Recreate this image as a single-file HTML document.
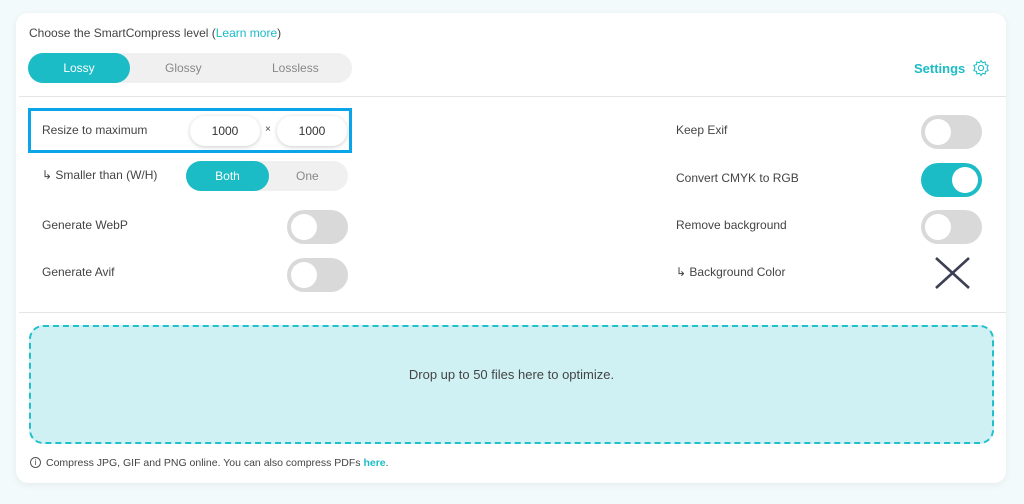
<!DOCTYPE html><html><head><style>
body{margin:0;width:1024px;height:504px;background:#f2fafc;font-family:"Liberation Sans",sans-serif;color:#444;position:relative;overflow:hidden}
.a{position:absolute}
.card{left:16px;top:13px;width:990px;height:470px;background:#fff;border-radius:12px;box-shadow:0 2px 8px rgba(0,0,0,.06)}
.t{font-size:12px;color:#444}
.seg{background:#f0f0f0;border-radius:16px}
.on{background:#1bbcc6;color:#fff;border-radius:16px;text-align:center}
.sw{width:61px;height:34px;border-radius:17px;background:#d9d9d9}
.sw::after{content:"";position:absolute;left:4px;top:4px;width:26px;height:26px;border-radius:50%;background:#fff}
.sw.o{background:#1bbcc6}.sw.o::after{left:31px}
.inp{width:70px;height:30px;border-radius:16px;background:#fff;box-shadow:0 1px 4px rgba(0,0,0,.2);text-align:center;line-height:30px;font-size:12px;color:#333}
</style></head><body>
<div class="a card"></div>
<div class="a t" style="left:29px;top:26px;font-size:12px">Choose the SmartCompress level (<span style="color:#1bbcc6">Learn more</span>)</div>
<div class="a seg" style="left:28px;top:53px;width:324px;height:30px"></div>
<div class="a on" style="left:28px;top:53px;width:102px;height:30px;line-height:30px;font-size:12px">Lossy</div>
<div class="a t" style="left:165px;top:61px;color:#888">Glossy</div>
<div class="a t" style="left:272px;top:61px;color:#888">Lossless</div>
<div class="a" style="left:914px;top:61px;font-size:13px;font-weight:bold;color:#1bbcc6">Settings</div>
<svg class="a" style="left:972px;top:59px" width="18" height="18" viewBox="0 0 24 24" fill="none" stroke="#1bbcc6" stroke-width="1.4"><circle cx="12" cy="12" r="3.5"/><path d="M12 2l2 3 3.5-1 .5 3.5 3.5 1-1.5 3.5 1.5 3.5-3.5 1-.5 3.5-3.5-1-2 3-2-3-3.5 1-.5-3.5-3.5-1L4 12 2.5 8.5l3.5-1L6.5 4 10 5z"/></svg>
<div class="a" style="left:19px;top:96px;width:987px;height:1px;background:#e5e5e5"></div>
<div class="a" style="left:28px;top:108px;width:324px;height:45px;border:3px solid #0aa5e8;box-sizing:border-box"></div>
<div class="a t" style="left:42px;top:123px">Resize to maximum</div>
<div class="a inp" style="left:190px;top:116px">1000</div>
<div class="a t" style="left:265px;top:124px;font-size:10px">×</div>
<div class="a inp" style="left:277px;top:116px">1000</div>
<div class="a t" style="left:42px;top:168px">↳ Smaller than (W/H)</div>
<div class="a seg" style="left:186px;top:161px;width:162px;height:30px"></div>
<div class="a on" style="left:186px;top:161px;width:83px;height:30px;line-height:30px;font-size:12px">Both</div>
<div class="a t" style="left:296px;top:169px;color:#888">One</div>
<div class="a t" style="left:42px;top:218px">Generate WebP</div>
<div class="a sw" style="left:287px;top:210px"></div>
<div class="a t" style="left:42px;top:265px">Generate Avif</div>
<div class="a sw" style="left:287px;top:258px"></div>
<div class="a t" style="left:676px;top:123px">Keep Exif</div>
<div class="a sw" style="left:921px;top:115px"></div>
<div class="a t" style="left:676px;top:171px">Convert CMYK to RGB</div>
<div class="a sw o" style="left:921px;top:163px"></div>
<div class="a t" style="left:676px;top:218px">Remove background</div>
<div class="a sw" style="left:921px;top:210px"></div>
<div class="a t" style="left:676px;top:265px">↳ Background Color</div>
<svg class="a" style="left:934px;top:257px" width="37" height="32"><path d="M2 1L35 31M35 1L2 31" stroke="#3d3f52" stroke-width="2.6"/></svg>
<div class="a" style="left:19px;top:312px;width:987px;height:1px;background:#e5e5e5"></div>
<div class="a" style="left:29px;top:325px;width:965px;height:119px;background:#d0f1f4;border:2px dashed #22bfcc;border-radius:14px;box-sizing:border-box"></div>
<div class="a" style="left:29px;top:367px;width:965px;text-align:center;font-size:13px;color:#444">Drop up to 50 files here to optimize.</div>
<div class="a" style="left:30px;top:457px;width:9px;height:9px;border:1px solid #555;border-radius:50%;font-size:8px;line-height:9px;text-align:center">i</div>
<div class="a" style="left:46px;top:457px;font-size:10.5px;color:#444">Compress JPG, GIF and PNG online. You can also compress PDFs <b style="color:#1bbcc6">here</b>.</div>
</body></html>
